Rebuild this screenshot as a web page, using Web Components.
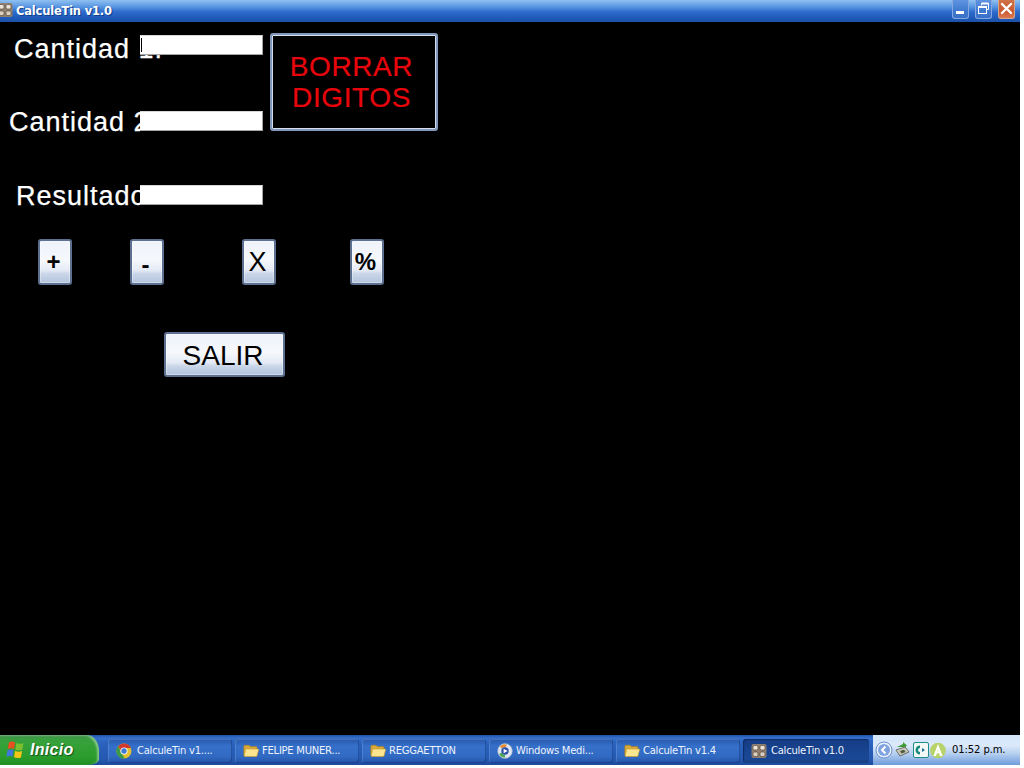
<!DOCTYPE html>
<html>
<head>
<meta charset="utf-8">
<title>CalculeTin v1.0</title>
<style>
  html, body { margin: 0; background: #fff; }
  body { font-family: "Liberation Sans", Arial, sans-serif; }
</style>
</head>
<body>
<xp-desktop>
  <xp-titlebar slot="title" caption="CalculeTin v1.0"></xp-titlebar>
  <calc-form></calc-form>
  <xp-taskbar slot="taskbar"></xp-taskbar>
</xp-desktop>

<script>
const APP_ICON = `
  <svg viewBox="0 0 16 16" width="16" height="16">
    <rect x="0.5" y="1" width="15" height="14" rx="2" fill="#8f7f70"/>
    <rect x="2" y="2.5" width="5" height="4.5" rx="1.4" fill="#e9e2d8" stroke="#5c4a3c" stroke-width=".7"/>
    <rect x="9" y="2.5" width="5" height="4.5" rx="1.4" fill="#e9e2d8" stroke="#5c4a3c" stroke-width=".7"/>
    <rect x="2" y="9" width="5" height="4.5" rx="1.4" fill="#d9cfc2" stroke="#5c4a3c" stroke-width=".7"/>
    <rect x="9" y="9" width="5" height="4.5" rx="1.4" fill="#d9cfc2" stroke="#5c4a3c" stroke-width=".7"/>
  </svg>`;

const FOLDER_ICON = `
  <svg viewBox="0 0 16 16" width="16" height="16">
    <path d="M.8 3.6 Q.8 2.2 2.2 2.2 H6 L7.4 3.6 H13 Q14 3.6 14 4.6 V13 H2 Q.8 13 .8 11.8 Z" fill="#d9a93a" stroke="#a47c1e" stroke-width=".6"/>
    <path d="M2.6 6 H15 Q15.9 6 15.6 6.8 L14 12.8 Q13.8 13.5 13 13.5 H2 Q1 13.5 1.3 12.6 Z" fill="#fbe58e" stroke="#c69a30" stroke-width=".6"/>
  </svg>`;

const CHROME_ICON = `
  <svg viewBox="0 0 16 16" width="16" height="16">
    <circle cx="8" cy="8" r="7.5" fill="#e2bf2f"/>
    <path d="M8 .5 A7.5 7.5 0 0 1 14.9 5 H8 A3.2 3.2 0 0 0 4.8 7.2 L2.2 3.2 A7.5 7.5 0 0 1 8 .5 Z" fill="#d2382e"/>
    <path d="M2.2 3.2 L5.4 9.6 L8.6 15.5 A7.5 7.5 0 0 1 2.2 3.2 Z" fill="#3b9a46"/>
    <circle cx="8" cy="8" r="3.6" fill="#fff"/>
    <circle cx="8" cy="8" r="2.7" fill="#3f79d8"/>
  </svg>`;

const MEDIA_ICON = `
  <svg viewBox="0 0 16 16" width="16" height="16">
    <circle cx="8" cy="8" r="7.4" fill="#dfe6f2" stroke="#8ea0bd" stroke-width=".6"/>
    <path d="M3 3.6 A6.6 6.6 0 0 1 9.8 1.7 L8.6 4.4 A3.8 3.8 0 0 0 4.8 5.4 Z" fill="#e58a2d"/>
    <path d="M2.2 11 A6.6 6.6 0 0 0 8 14.6 L8 12 A3.8 3.8 0 0 1 4.6 9.6 Z" fill="#4aa84e"/>
    <circle cx="8" cy="8" r="3.7" fill="#2e4fa8"/>
    <path d="M6.6 5.7 L10.6 8 L6.6 10.3 Z" fill="#fff"/>
  </svg>`;

const ICONS = { app: APP_ICON, folder: FOLDER_ICON, chrome: CHROME_ICON, media: MEDIA_ICON };

class XpDesktop extends HTMLElement {
  constructor() {
    super();
    this.attachShadow({ mode: 'open' }).innerHTML = `
      <style>
        :host {
          display: flex;
          flex-direction: column;
          width: 1020px;
          height: 765px;
          background: #000;
          overflow: hidden;
        }
        .body { flex: 1; min-height: 0; }
      </style>
      <slot name="title"></slot>
      <div class="body"><slot></slot></div>
      <slot name="taskbar"></slot>
    `;
  }
}

class XpTitlebar extends HTMLElement {
  constructor() {
    super();
    this.attachShadow({ mode: 'open' }).innerHTML = `
      <style>
        :host {
          display: flex;
          align-items: center;
          height: 22px;
          padding-right: 5px;
          box-sizing: border-box;
          background: linear-gradient(#8fc0f0 0, #5f9be4 6px, #2c6bcb 12px, #1f5ab8 18px, #1c52a8 22px);
        }
        .icon { width: 16px; height: 16px; margin: -2px 0 0 -3px; }
        .caption {
          margin: -1px 0 0 3px;
          flex: 1;
          color: #fff;
          font: bold 11.5px "DejaVu Sans", sans-serif;
          letter-spacing: -.2px;
          text-shadow: 1px 1px 0 #0f3d8c;
        }
        .ctrl {
          display: flex;
          gap: 6px;
          align-items: flex-start;
          align-self: flex-start;
        }
        .ctrl span {
          display: flex;
          width: 15px;
          height: 18px;
          border: 1px solid #86a8de;
          border-top: 0;
          border-radius: 0 0 3px 3px;
          background: linear-gradient(#5f95e0, #3f78d0 60%, #3a70c8);
        }
        .ctrl span.close {
          background: linear-gradient(#d0744a, #c9582f 60%, #d9784f);
          border-color: #d8a48c;
        }
        svg { display: block; }
      </style>
      <div class="icon">${APP_ICON}</div>
      <div class="caption"></div>
      <div class="ctrl">
        <span><svg viewBox="1 0 15 18" width="15" height="18"><rect x="4" y="11" width="8" height="3" fill="#fff"/></svg></span>
        <span><svg viewBox="1 0 15 18" width="15" height="18" fill="none" stroke="#fff"><path d="M6.5 5.5 V3.5 H13.5 V9.5 H11.5" stroke-width="1"/><path d="M6.5 3.5 H13.5" stroke-width="2"/><rect x="3.5" y="6.5" width="8" height="7" stroke-width="1"/><path d="M3.5 7 H11.5" stroke-width="2"/></svg></span>
        <span class="close"><svg viewBox="1 0 15 18" width="15" height="18" stroke="#fff" stroke-width="2.4" stroke-linecap="round"><path d="M4 4 L13 13 M13 4 L4 13"/></svg></span>
      </div>
    `;
  }

  connectedCallback() {
    this.shadowRoot.querySelector('.caption').textContent = this.getAttribute('caption');
  }
}

class CalcField extends HTMLElement {
  constructor() {
    super();
    this.attachShadow({ mode: 'open' }).innerHTML = `
      <style>
        :host {
          display: grid;
          grid-template-columns: 140px 123px;
          grid-template-rows: 20px;
        }
        .label {
          grid-area: 1 / 1 / 2 / 3;
          color: #fff;
          font-size: 27px;
          line-height: 22px;
          letter-spacing: 1px;
          -webkit-text-stroke: .25px #fff;
          white-space: nowrap;
          padding-left: var(--label-x, 0);
          padding-top: var(--label-y, 0);
          clip-path: inset(-8px var(--label-clip, 0) -8px 0);
        }
        .input {
          grid-area: 1 / 2;
          position: relative;
          background: #fff;
          border: 1px solid #a5a5a5;
          border-top-color: #d8d8d8;
          border-left: 0;
          box-sizing: border-box;
        }
        .caret {
          display: none;
          width: 1px;
          height: 14px;
          margin: 2px 0 0 1px;
          background: #000;
        }
        :host([focused]) .caret { display: block; }
      </style>
      <div class="label"><slot></slot></div>
      <div class="input"><div class="caret"></div></div>
    `;
  }
}

class CalcButton extends HTMLElement {
  constructor() {
    super();
    this.attachShadow({ mode: 'open' }).innerHTML = `
      <style>
        :host {
          display: flex;
          align-items: center;
          justify-content: center;
          box-sizing: border-box;
          padding-right: 3px;
          border: 2px solid #5d7090;
          border-radius: 3px;
          color: #000;
          background: linear-gradient(#eef2fa 0, #f6f8fc 45%, #e4eaf5 70%, #cad6e8 78%, #b4c4dd 100%);
          box-shadow: inset 0 0 0 1px rgba(255,255,255,.35);
        }
        :host([variant=danger]) {
          background: #000;
          color: #e8060c;
          border-color: #8198bc;
          box-shadow: inset 0 0 0 1px #d4deee;
          text-align: center;
          line-height: 31px;
          letter-spacing: .6px;
          -webkit-text-stroke: .2px #e8060c;
          padding-right: 5px;
        }
      </style>
      <slot></slot>
    `;
  }
}

class CalcForm extends HTMLElement {
  constructor() {
    super();
    this.attachShadow({ mode: 'open' }).innerHTML = `
      <style>
        :host { display: block; }
        .top {
          display: grid;
          grid-template-columns: 263px 168px;
          column-gap: 7px;
          padding-top: 11px;
        }
        .fields {
          display: flex;
          flex-direction: column;
          padding-top: 2px;
        }
        calc-field + calc-field { margin-top: 56px; }
        calc-field + calc-field + calc-field { margin-top: 54px; }
        .borrar { height: 98px; font-size: 28px; }
        .ops {
          display: flex;
          margin: 34px 0 0 38px;
        }
        .ops calc-button { width: 34px; height: 46px; font-size: 24px; }
        .ops .b { font-weight: bold; }
        .ops calc-button:nth-child(2) { margin-left: 58px; padding-top: 5px; }
        .ops calc-button:nth-child(3) { margin-left: 78px; font-size: 27px; }
        .ops calc-button:nth-child(4) { margin-left: 74px; }
        .salir {
          width: 121px;
          height: 45px;
          margin: 47px 0 0 164px;
          padding-top: 2px;
          font-size: 28px;
        }
      </style>
      <div class="top">
        <div class="fields">
          <calc-field focused style="--label-x:14px; --label-y:3px">Cantidad 1:</calc-field>
          <calc-field style="--label-x:9px; --label-clip:123px">Cantidad 2:</calc-field>
          <calc-field style="--label-x:16px; --label-clip:123px">Resultado:</calc-field>
        </div>
        <calc-button class="borrar" variant="danger">BORRAR<br>DIGITOS</calc-button>
      </div>
      <div class="ops">
        <calc-button class="b">+</calc-button>
        <calc-button class="b">-</calc-button>
        <calc-button>X</calc-button>
        <calc-button class="b">%</calc-button>
      </div>
      <calc-button class="salir">SALIR</calc-button>
    `;
  }
}

class XpTask extends HTMLElement {
  constructor() {
    super();
    this.attachShadow({ mode: 'open' }).innerHTML = `
      <style>
        :host {
          display: flex;
          align-items: center;
          gap: 3px;
          box-sizing: border-box;
          width: 124px;
          height: 24px;
          padding: 0 0 1px 8px;
          border-radius: 3px;
          color: #eef3fd;
          font: 10px "DejaVu Sans", sans-serif;
          letter-spacing: -.25px;
          white-space: nowrap;
          background: linear-gradient(#2858ab, #3570ca 30%, #316ac3 72%, #2555a8);
          box-shadow: inset 1px 1px 0 rgba(255,255,255,.14), inset -1px -1px 0 rgba(0,0,40,.25);
        }
        :host([active]) {
          width: 126px;
          gap: 4px;
          background: linear-gradient(#163c84, #1a4896 80%, #17407f);
          box-shadow: inset 1px 1px 1px #0d2c66;
        }
        .icon { width: 16px; height: 16px; flex: none; }
        svg { display: block; }
      </style>
      <div class="icon"></div>
      <slot></slot>
    `;
  }

  connectedCallback() {
    this.shadowRoot.querySelector('.icon').innerHTML = ICONS[this.getAttribute('icon')];
  }
}

class XpTray extends HTMLElement {
  constructor() {
    super();
    this.attachShadow({ mode: 'open' }).innerHTML = `
      <style>
        :host {
          display: flex;
          align-items: center;
          flex: 1;
          align-self: stretch;
          padding-left: 2px;
          margin-left: 4px;
          background: linear-gradient(#d4e6fa 0, #dbe9fb 35%, #b6d0f0 62%, #6f9bdb 100%);
          color: #000;
          font: 10px "DejaVu Sans", sans-serif;
          letter-spacing: -.1px;
          white-space: nowrap;
        }
        svg { display: block; flex: none; }
        .time { margin: 0 0 2px 5px; }
      </style>
      <svg viewBox="0 0 18 18" width="18" height="18">
        <circle cx="9" cy="9" r="8" fill="#e9f0fb" stroke="#6f93d0"/>
        <circle cx="9" cy="9" r="6" fill="#7ea3df"/>
        <path d="M10.5 5.5 L7 9 L10.5 12.5" fill="none" stroke="#fff" stroke-width="2"/>
      </svg>
      <svg viewBox="0 0 18 18" width="18" height="18">
        <path d="M4 6 L10 3 L10 1 L14 4.5 L10 8 L10 6 Z" fill="#3e9c35"/>
        <path d="M3 9 L12 6 L16 11 L7 15 Z" fill="#c9c9c0" stroke="#55554a" stroke-width=".8"/>
        <path d="M7 10 L11 8.8 L12.6 11 L8.4 12.6 Z" fill="#4a5a3a"/>
      </svg>
      <svg viewBox="0 0 18 18" width="18" height="18" style="margin-left:1px">
        <rect x="1.5" y="1.5" width="15" height="15" rx="1.5" fill="#f4f8f4" stroke="#1f8e88"/>
        <path d="M8 4.5 A4.5 4.5 0 1 0 8 13.5 V11 A2 2 0 1 1 8 7 Z" fill="#178a80"/>
        <path d="M10 7 L13 9 L10 11 Z" fill="#1a6f9e"/>
      </svg>
      <svg viewBox="0 0 18 18" width="18" height="18" style="margin-left:-1px">
        <circle cx="9" cy="9.5" r="7.8" fill="#b8d36a"/>
        <path d="M9 3 L13.6 15 H11 L10.1 12.3 H7.9 L7 15 H4.4 Z M8.5 10.2 H9.5 L9 8.5 Z" fill="#fff" fill-rule="evenodd"/>
      </svg>
      <span class="time">01:52 p.m.</span>
    `;
  }
}

class XpTaskbar extends HTMLElement {
  constructor() {
    super();
    this.attachShadow({ mode: 'open' }).innerHTML = `
      <style>
        :host {
          display: flex;
          align-items: center;
          height: 30px;
          background: linear-gradient(#234fa6 0, #3570cb 3px, #2a62bd 8px, #2559b0 24px, #1c4a9c 30px);
        }
        .start {
          display: flex;
          align-items: center;
          align-self: stretch;
          flex: none;
          box-sizing: border-box;
          width: 99px;
          padding: 0 0 1px 6px;
          gap: 6px;
          border-radius: 0 12px 12px 0 / 0 16px 6px 0;
          background: linear-gradient(#2f7f3a 0, #3a9c42 3px, #36a23a 8px, #2a9c2c 22px, #1f8f22 30px);
          box-shadow: inset -2px 1px 2px rgba(255,255,255,.4);
          color: #fff;
          font: italic bold 16px "Liberation Sans", sans-serif;
          letter-spacing: .3px;
          text-shadow: 1px 1px 1px #14501a;
        }
        .tasks {
          display: flex;
          gap: 3px;
          margin: 2px 0 0 9px;
        }
        svg { display: block; }
      </style>
      <div class="start">
        <svg viewBox="0.5 1.5 16 15.5" width="18" height="18">
          <path d="M3 2.5 Q6 1 8.6 2.6 L7.6 8.4 Q5 7 2 8.4 Z" fill="#e8501f"/>
          <path d="M9.8 3 Q12.5 4.4 16 3.2 L15 9 Q12 10.2 8.8 8.8 Z" fill="#7cc032"/>
          <path d="M1.8 9.4 Q4.6 8.2 7.3 9.4 L6.2 15.2 Q3.6 13.8 .8 15.2 Z" fill="#3f78dc"/>
          <path d="M8.6 10 Q11.6 11.4 14.8 10.2 L13.8 16 Q10.8 17 7.6 15.8 Z" fill="#f5c518"/>
        </svg>
        <span>Inicio</span>
      </div>
      <div class="tasks">
        <xp-task icon="chrome" style="gap:5px">CalculeTin v1....</xp-task>
        <xp-task icon="folder">FELIPE MUNER...</xp-task>
        <xp-task icon="folder">REGGAETTON</xp-task>
        <xp-task icon="media">Windows Medi...</xp-task>
        <xp-task icon="folder">CalculeTin v1.4</xp-task>
        <xp-task icon="app" active>CalculeTin v1.0</xp-task>
      </div>
      <xp-tray></xp-tray>
    `;
  }
}

customElements.define('xp-desktop', XpDesktop);
customElements.define('xp-titlebar', XpTitlebar);
customElements.define('calc-field', CalcField);
customElements.define('calc-button', CalcButton);
customElements.define('calc-form', CalcForm);
customElements.define('xp-task', XpTask);
customElements.define('xp-tray', XpTray);
customElements.define('xp-taskbar', XpTaskbar);
</script>
</body>
</html>
